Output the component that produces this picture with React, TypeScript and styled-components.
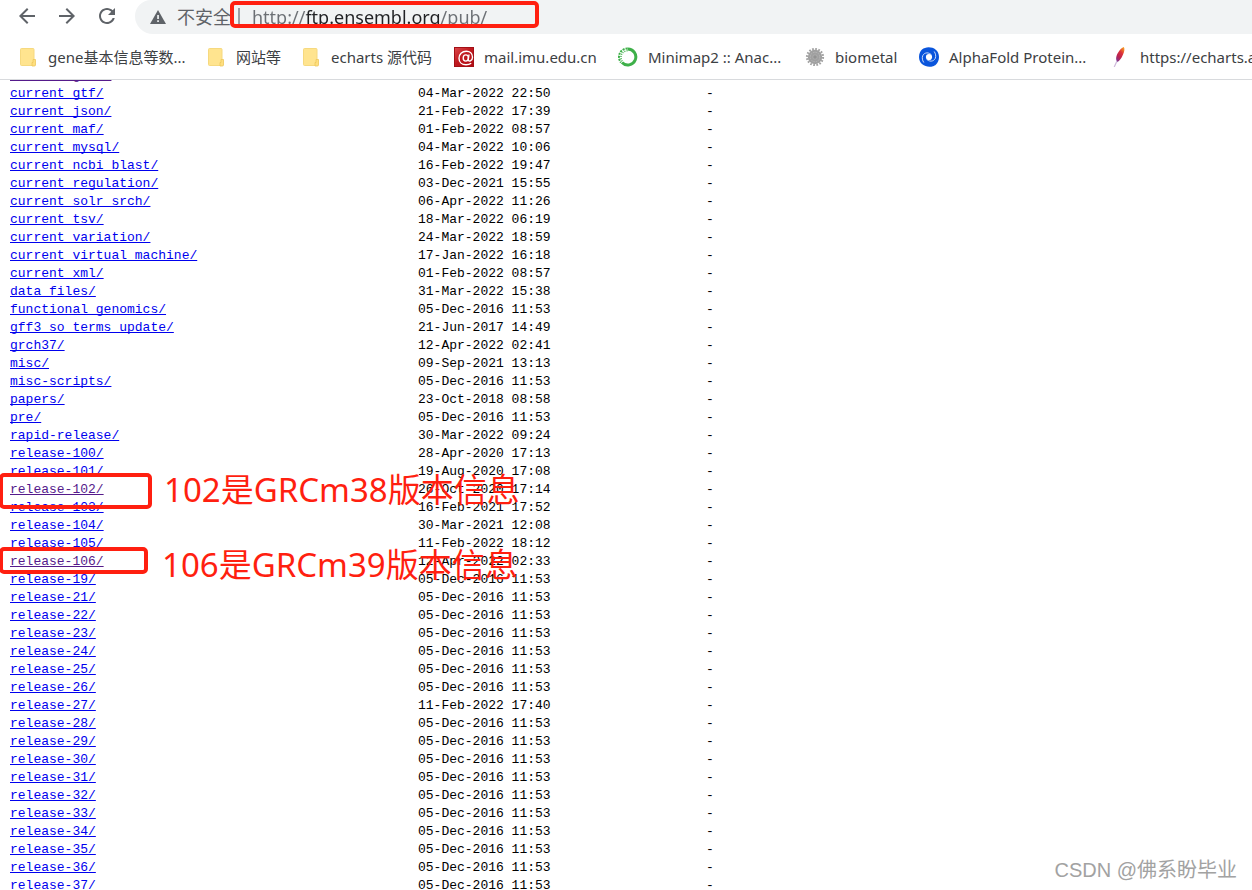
import React from 'react';
import styled, { createGlobalStyle } from 'styled-components';

const uiFont = '"Noto Sans", "Noto Sans CJK SC", sans-serif';
const red = '#ff1f10';

const GlobalStyle = createGlobalStyle`
  * { box-sizing: border-box; }
  body { margin: 0; background: #fff; overflow: hidden; }
`;

const Browser = styled.div`
  position: relative;
  display: flex;
  flex-direction: column;
  height: 100vh;
  overflow: hidden;
  font-family: ${uiFont};
`;

const Toolbar = styled.div`
  display: flex;
  flex: none;
  height: 34px;
  padding-left: 15px;
  gap: 16px;
  overflow: hidden;
`;

const ToolButton = styled.button`
  flex: none;
  width: 24px;
  height: 32px;
  padding: 0;
  border: 0;
  background: none;
  color: #5f6368;
  display: flex;
  align-items: center;
  justify-content: center;
`;

const AddressBar = styled.div`
  flex: 1;
  display: flex;
  align-items: center;
  height: 34px;
  padding-left: 14px;
  border-radius: 16px 0 0 18px;
  background: #f1f3f4;
  color: #5f6368;
`;

const Security = styled.span`
  display: flex;
  align-items: center;
  gap: 10px;
  font-size: 18px;
  line-height: 32px;
  white-space: nowrap;
`;

const Divider = styled.span`
  width: 2px;
  height: 18px;
  margin: 0 12px 0 7px;
  background: #9aa0a6;
`;

const UrlInput = styled.input`
  flex: 1;
  min-width: 0;
  height: 32px;
  padding: 0;
  border: 0;
  outline: 0;
  font: 18px/32px ${uiFont};
  color: #202124;
  background: linear-gradient(to right, #6b6f74 54px, #202124 54px, #202124 188px, #6b6f74 188px);
  background-clip: text;
  -webkit-background-clip: text;
  -webkit-text-fill-color: transparent;
`;

const Bookmarks = styled.nav`
  display: flex;
  flex: none;
  height: 46px;
  padding-left: 18px;
  border-bottom: 1px solid #d8dadd;
  overflow: hidden;
`;

const Bookmark = styled.a<{ $width: number }>`
  flex: none;
  display: flex;
  align-items: center;
  gap: 10px;
  width: ${(p) => p.$width}px;
  height: 46px;
  color: #3c4043;
  font-size: 15px;
  line-height: 20px;
  white-space: nowrap;
  text-decoration: none;

  svg { flex: none; }
`;

const Page = styled.main`
  position: relative;
  flex: 1;
  min-height: 0;
  overflow: hidden;
`;

const Listing = styled.table`
  margin: -13px 0 0 10px;
  border-collapse: collapse;
  font: 13px/18px "Liberation Mono", monospace;
  color: #000;
  white-space: pre;
`;

const Cell = styled.td<{ $width: number }>`
  width: ${(p) => p.$width}px;
  height: 18px;
  padding: 0;
`;

const FileLink = styled.a<{ $visited?: boolean }>`
  color: ${(p) => (p.$visited ? '#551a8b' : '#0000ee')};
  text-decoration: underline;
  text-decoration-skip-ink: none;
`;

const Frame = styled.div<{ $x: number; $y: number; $w: number; $h: number }>`
  position: absolute;
  left: ${(p) => p.$x}px;
  top: ${(p) => p.$y}px;
  width: ${(p) => p.$w}px;
  height: ${(p) => p.$h}px;
  border: 4px solid ${red};
  border-radius: 5px;
  pointer-events: none;
`;

const Note = styled.div<{ $x: number; $y: number }>`
  position: absolute;
  left: ${(p) => p.$x}px;
  top: ${(p) => p.$y}px;
  color: ${red};
  font-size: 33px;
  line-height: 44px;
  white-space: nowrap;
`;

const Watermark = styled.div`
  position: absolute;
  right: 15px;
  bottom: 6px;
  color: #a2a2a2;
  font: 20px/28px "Liberation Sans", "Noto Sans CJK SC", sans-serif;
  text-shadow: -1px -1px 0 #fff;
`;

const ArrowIcon = ({ forward = false }: { forward?: boolean }) => (
  <svg width="24" height="24" viewBox="0 0 24 24" fill="currentColor" aria-hidden="true">
    <path
      d={
        forward
          ? 'M4 13h12.17l-5.59 5.59L12 20l8-8-8-8-1.41 1.41L16.17 11H4z'
          : 'M20 11H7.83l5.59-5.59L12 4l-8 8 8 8 1.41-1.41L7.83 13H20z'
      }
    />
  </svg>
);

const ReloadIcon = () => (
  <svg width="24" height="24" viewBox="0 0 24 24" fill="currentColor" aria-hidden="true">
    <path d="M17.65 6.35C16.2 4.9 14.21 4 12 4c-4.42 0-7.99 3.58-7.99 8s3.57 8 7.99 8c3.73 0 6.84-2.55 7.73-6h-2.08c-.82 2.33-3.04 4-5.65 4-3.31 0-6-2.69-6-6s2.69-6 6-6c1.66 0 3.14.69 4.22 1.78L13 11h7V4z" />
  </svg>
);

const WarningIcon = () => (
  <svg width="18" height="18" viewBox="0 0 18 18" aria-hidden="true">
    <path d="M9 2 17 16H1z" fill="#5f6368" />
    <path d="M8.2 7h1.7v4H8.2zM8.2 12.2h1.7v1.7H8.2z" fill="#f1f3f4" />
  </svg>
);

const FolderIcon = () => (
  <svg width="20" height="20" viewBox="0 0 20 20" aria-hidden="true">
    <rect x="2.5" y="1.5" width="13.5" height="17" rx="1" fill="#ffe48f" stroke="#f6d97f" />
    <path d="M15 12.5h2.5V18q0 1-1.2 1H14v-3.5h1z" fill="#ffdf7f" stroke="#edc65c" strokeWidth=".8" />
  </svg>
);

const MailIcon = () => (
  <svg width="20" height="20" viewBox="0 0 20 20" aria-hidden="true">
    <defs>
      <linearGradient id="mail" x1="0" y1="0" x2="1" y2="1">
        <stop offset="0" stopColor="#dc4a4c" />
        <stop offset=".45" stopColor="#c01a20" />
        <stop offset="1" stopColor="#b00a12" />
      </linearGradient>
    </defs>
    <rect x=".5" y=".5" width="19" height="19" fill="url(#mail)" stroke="#a31016" />
    <g fill="none" stroke="#fff" strokeWidth="1.4">
      <ellipse cx="11.8" cy="11" rx="2.6" ry="3.1" />
      <path d="M15 7.500l-.8 5.500c.2 2 4.300 1 4.300-2.800C18.500 6.500 15.800 4.200 12.300 4.200 8 4.200 5 7.200 5 11.200s3 6.600 7 6.600c2 0 3.800-.500 5.200-1.600" />
    </g>
  </svg>
);

const RingIcon = () => (
  <svg width="20" height="20" viewBox="0 0 20 20" fill="none" stroke="#3eb049" aria-hidden="true">
    <path d="M9.500 2A8 8 0 1 1 4 15.500" strokeWidth="3" />
    <path d="M9.500 1.500A8.500 8.500 0 0 0 3 15.500" strokeWidth="2" strokeDasharray="2 1" />
    <path d="M9.500 3.800A6.500 6.500 0 0 0 4.500 14.500" strokeWidth="1.400" strokeDasharray="1 1.200" />
  </svg>
);

const BurstIcon = () => (
  <svg width="20" height="20" viewBox="0 0 20 20" aria-hidden="true">
    <circle cx="10" cy="10" r="8" fill="none" stroke="#a0a0a0" strokeWidth="2.200" strokeDasharray="1.700 1.440" />
    <circle cx="10" cy="10" r="7.200" fill="#a0a0a0" />
    <circle cx="10" cy="10" r="4.800" fill="none" stroke="#b8b8b8" strokeWidth="1" strokeDasharray="1.500 1" />
    <circle cx="10" cy="10" r="2.200" fill="#929292" stroke="#b8b8b8" strokeWidth=".6" />
  </svg>
);

const SwirlIcon = () => (
  <svg width="20" height="20" viewBox="0 0 20 20" aria-hidden="true">
    <path d="M6 .9C12-1 20 2 20 10c0 3.500-1.500 6-3 7.500-1 1-1.800 1.300-3 1.700C8 21 0 18 0 10c0-3.500 1.500-6 3-7.500C4 1.500 4.800 1.200 6 .9z" fill="#0a55dc" />
    <circle cx="10" cy="10" r="3.100" fill="#fff" />
    <g fill="none" stroke="#dfe9fb" strokeWidth=".9">
      <path d="M12.500 8C10 5 5.500 5.200 3.800 8.500c-1 2.500-.4 5 1 7" />
      <path d="M7.500 12c2.500 3 7 2.800 8.700-.500 1-2.500.4-5-1-7" />
    </g>
  </svg>
);

const FeatherIcon = () => (
  <svg width="20" height="20" viewBox="0 0 20 20" aria-hidden="true">
    <defs>
      <linearGradient id="feather" x1=".8" y1="0" x2=".2" y2="1">
        <stop offset="0" stopColor="#f59a23" />
        <stop offset=".35" stopColor="#dc3038" />
        <stop offset=".7" stopColor="#b82252" />
        <stop offset="1" stopColor="#7b3a94" />
      </linearGradient>
    </defs>
    <path d="M13.800 0c1.200 1.500.6 5-1 8-1.300 3-2.800 5.500-5.500 7.200C5.200 12 6.200 8.500 8.500 5c1.600-2.500 3.300-4.400 5.300-5z" fill="url(#feather)" />
    <path d="M7 14 4.200 20" stroke="#cdb9da" strokeWidth="1.200" />
  </svg>
);

const bookmarks: [string, number, () => React.JSX.Element][] = [
  ['gene基本信息等数...', 188, FolderIcon],
  ['网站等', 95, FolderIcon],
  ['echarts 源代码', 153, FolderIcon],
  ['mail.imu.edu.cn', 164, MailIcon],
  ['Minimap2 :: Anac...', 187, RingIcon],
  ['biometal', 114, BurstIcon],
  ['AlphaFold Protein...', 191, SwirlIcon],
  ['https://echarts.apache.org', 240, FeatherIcon],
];

const old = '05-Dec-2016 11:53';

const files: [string, string][] = [
  ['current_gff3/', '04-Mar-2022 22:50'],
  ['current_gtf/', '04-Mar-2022 22:50'],
  ['current_json/', '21-Feb-2022 17:39'],
  ['current_maf/', '01-Feb-2022 08:57'],
  ['current_mysql/', '04-Mar-2022 10:06'],
  ['current_ncbi_blast/', '16-Feb-2022 19:47'],
  ['current_regulation/', '03-Dec-2021 15:55'],
  ['current_solr_srch/', '06-Apr-2022 11:26'],
  ['current_tsv/', '18-Mar-2022 06:19'],
  ['current_variation/', '24-Mar-2022 18:59'],
  ['current_virtual_machine/', '17-Jan-2022 16:18'],
  ['current_xml/', '01-Feb-2022 08:57'],
  ['data_files/', '31-Mar-2022 15:38'],
  ['functional_genomics/', old],
  ['gff3_so_terms_update/', '21-Jun-2017 14:49'],
  ['grch37/', '12-Apr-2022 02:41'],
  ['misc/', '09-Sep-2021 13:13'],
  ['misc-scripts/', old],
  ['papers/', '23-Oct-2018 08:58'],
  ['pre/', old],
  ['rapid-release/', '30-Mar-2022 09:24'],
  ['release-100/', '28-Apr-2020 17:13'],
  ['release-101/', '19-Aug-2020 17:08'],
  ['release-102/', '26-Oct-2020 17:14'],
  ['release-103/', '16-Feb-2021 17:52'],
  ['release-104/', '30-Mar-2021 12:08'],
  ['release-105/', '11-Feb-2022 18:12'],
  ['release-106/', '12-Apr-2022 02:33'],
  ['release-19/', old],
  ['release-21/', old],
  ['release-22/', old],
  ['release-23/', old],
  ['release-24/', old],
  ['release-25/', old],
  ['release-26/', old],
  ['release-27/', '11-Feb-2022 17:40'],
  ['release-28/', old],
  ['release-29/', old],
  ['release-30/', old],
  ['release-31/', old],
  ['release-32/', old],
  ['release-33/', old],
  ['release-34/', old],
  ['release-35/', old],
  ['release-36/', old],
  ['release-37/', old],
];

const visited = ['current_gff3/', 'release-102/', 'release-106/'];

export default function App() {
  return (
    <Browser>
      <GlobalStyle />
      <Toolbar>
        <ToolButton aria-label="Back"><ArrowIcon /></ToolButton>
        <ToolButton aria-label="Forward"><ArrowIcon forward /></ToolButton>
        <ToolButton aria-label="Reload"><ReloadIcon /></ToolButton>
        <AddressBar>
          <Security><WarningIcon />不安全</Security>
          <Divider />
          <UrlInput aria-label="Address" defaultValue="http://ftp.ensembl.org/pub/" />
        </AddressBar>
      </Toolbar>
      <Bookmarks>
        {bookmarks.map(([label, width, Icon]) => (
          <Bookmark key={label} href="#" $width={width}>
            <Icon />
            {label}
          </Bookmark>
        ))}
      </Bookmarks>
      <Page>
        <Listing>
          <tbody>
            {files.map(([name, date]) => (
              <tr key={name}>
                <Cell $width={408}>
                  <FileLink href={'#' + name} $visited={visited.includes(name)}>{name}</FileLink>
                </Cell>
                <Cell $width={288}>{date}</Cell>
                <Cell $width={8}>-</Cell>
              </tr>
            ))}
          </tbody>
        </Listing>
        <Frame $x={-1} $y={393} $w={153} $h={36} />
        <Note $x={164} $y={388}>102是GRCm38版本信息</Note>
        <Frame $x={-1} $y={467} $w={149} $h={27} />
        <Note $x={162} $y={463}>106是GRCm39版本信息</Note>
      </Page>
      <Frame $x={230} $y={1} $w={309} $h={27} />
      <Watermark>CSDN @佛系盼毕业</Watermark>
    </Browser>
  );
}
